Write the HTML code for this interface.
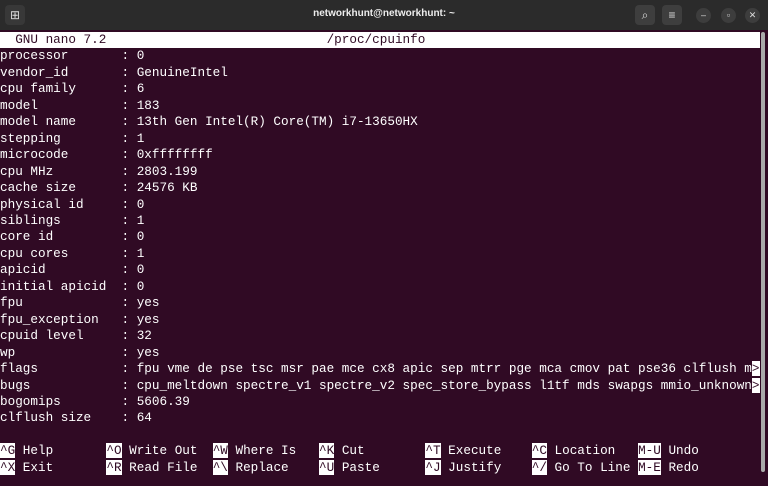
<!DOCTYPE html>
<html><head><style>
body{margin:0;width:768px;height:486px;background:#300a24;overflow:hidden;font-family:"Liberation Mono",monospace;}
.tb{position:absolute;left:0;top:0;width:768px;height:30px;background:#2b2b2b;}
.title{position:absolute;left:0;width:768px;top:8px;text-align:center;color:#eee;font:bold 10px "Liberation Sans",sans-serif;}
.btn{position:absolute;top:5px;width:20px;height:20px;border-radius:4px;background:#3e3e3e;color:#ddd;font:12px "Liberation Sans",sans-serif;text-align:center;line-height:20px}
.circ{position:absolute;top:8px;width:15px;height:15px;border-radius:50%;background:#3d3d3d;color:#ddd;font:9px "Liberation Sans",sans-serif;text-align:center;line-height:15px}
pre{position:absolute;left:0;top:32px;margin:0;font-family:"Liberation Mono",monospace;font-size:12.67px;line-height:16.45px;color:#fff;white-space:pre;}
.hd{background:#fff;color:#300a24;display:inline-block;width:760px}
.k{background:#fff;color:#300a24}
.sb{position:absolute;left:761px;top:32px;width:4px;height:440px;background:#aaa;border-radius:2px}
</style></head><body>
<div class="tb">
<div class="btn" style="left:5px;background:#383838">⊞</div>
<div class="title">networkhunt@networkhunt: ~</div>
<div class="btn" style="left:635px">⌕</div>
<div class="btn" style="left:662px">≡</div>
<div class="circ" style="left:696px">–</div>
<div class="circ" style="left:721px">▫</div>
<div class="circ" style="left:745px">✕</div>
</div>
<div class="sb"></div>
<pre><span class="hd">  GNU nano 7.2                             /proc/cpuinfo</span>
processor       : 0
vendor_id       : GenuineIntel
cpu family      : 6
model           : 183
model name      : 13th Gen Intel(R) Core(TM) i7-13650HX
stepping        : 1
microcode       : 0xffffffff
cpu MHz         : 2803.199
cache size      : 24576 KB
physical id     : 0
siblings        : 1
core id         : 0
cpu cores       : 1
apicid          : 0
initial apicid  : 0
fpu             : yes
fpu_exception   : yes
cpuid level     : 32
wp              : yes
flags           : fpu vme de pse tsc msr pae mce cx8 apic sep mtrr pge mca cmov pat pse36 clflush m<span class="k">&gt;</span>
bugs            : cpu_meltdown spectre_v1 spectre_v2 spec_store_bypass l1tf mds swapgs mmio_unknown<span class="k">&gt;</span>
bogomips        : 5606.39
clflush size    : 64

<span class="k">^G</span> Help       <span class="k">^O</span> Write Out  <span class="k">^W</span> Where Is   <span class="k">^K</span> Cut        <span class="k">^T</span> Execute    <span class="k">^C</span> Location   <span class="k">M-U</span> Undo
<span class="k">^X</span> Exit       <span class="k">^R</span> Read File  <span class="k">^\</span> Replace    <span class="k">^U</span> Paste      <span class="k">^J</span> Justify    <span class="k">^/</span> Go To Line <span class="k">M-E</span> Redo</pre>
</body></html>
